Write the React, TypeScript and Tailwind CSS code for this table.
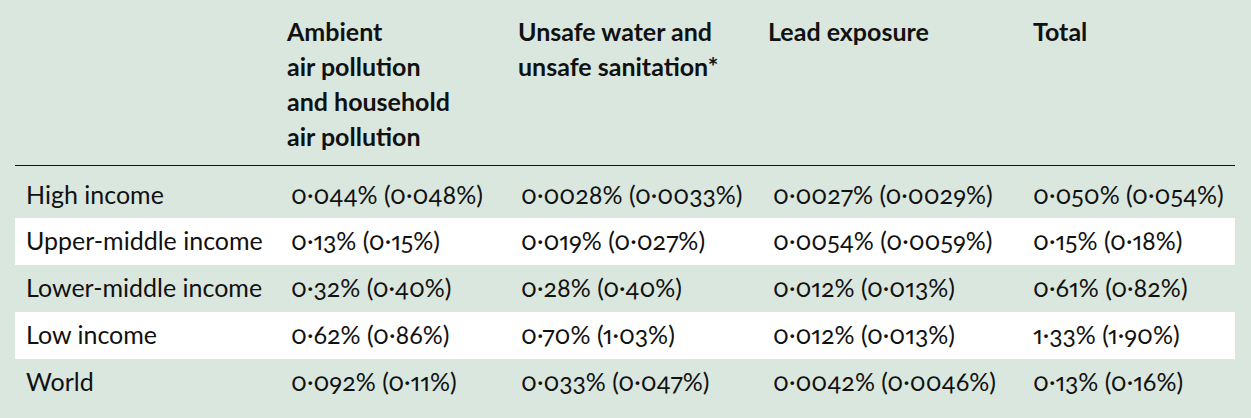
const headers = [
  "",
  "Ambient\nair pollution\nand household\nair pollution",
  "Unsafe water and\nunsafe sanitation*",
  "Lead exposure",
  "Total",
];

const rows = [
  ["High income", "0·044% (0·048%)", "0·0028% (0·0033%)", "0·0027% (0·0029%)", "0·050% (0·054%)"],
  ["Upper-middle income", "0·13% (0·15%)", "0·019% (0·027%)", "0·0054% (0·0059%)", "0·15% (0·18%)"],
  ["Lower-middle income", "0·32% (0·40%)", "0·28% (0·40%)", "0·012% (0·013%)", "0·61% (0·82%)"],
  ["Low income", "0·62% (0·86%)", "0·70% (1·03%)", "0·012% (0·013%)", "1·33% (1·90%)"],
  ["World", "0·092% (0·11%)", "0·033% (0·047%)", "0·0042% (0·0046%)", "0·13% (0·16%)"],
];

// left padding per column, header and body differ slightly
const headPad = ["pl-[13px]", "pl-[3px]", "pl-[3px]", "pl-[3px]", "pl-[4px]"];
const bodyPad = ["pl-[11px]", "pl-[7px]", "pl-[6px]", "pl-[8px]", "pl-[4px]"];

export default function App() {
  return (
    <div className="min-h-screen bg-[#dae7df] font-['Lato',sans-serif] text-[#111]">
      <div className="ml-[15px] w-[1220px]">
        {/* Header */}
        <div className="grid grid-cols-[269px_231px_250px_264px_206px] border-b border-[#111] pt-[14px] pb-[11px] text-[25px] font-bold leading-[35px]">
          {headers.map((h, i) => (
            <div key={i} className={`${headPad[i]} whitespace-pre-line`}>
              {h}
            </div>
          ))}
        </div>

        {/* Body */}
        {rows.map((row, r) => (
          <div
            key={r}
            className={`grid grid-cols-[269px_231px_250px_264px_206px] text-[25px] leading-[30px] oldstyle-nums proportional-nums ${
              r === 0 ? "h-[52px] pt-[13px]" : "h-[47px] pt-[7px]"
            } ${r % 2 === 1 ? "bg-white" : ""}`}
          >
            {row.map((cell, c) => (
              <div key={c} className={`${bodyPad[c]} whitespace-nowrap`}>
                {cell}
              </div>
            ))}
          </div>
        ))}
      </div>
    </div>
  );
}
